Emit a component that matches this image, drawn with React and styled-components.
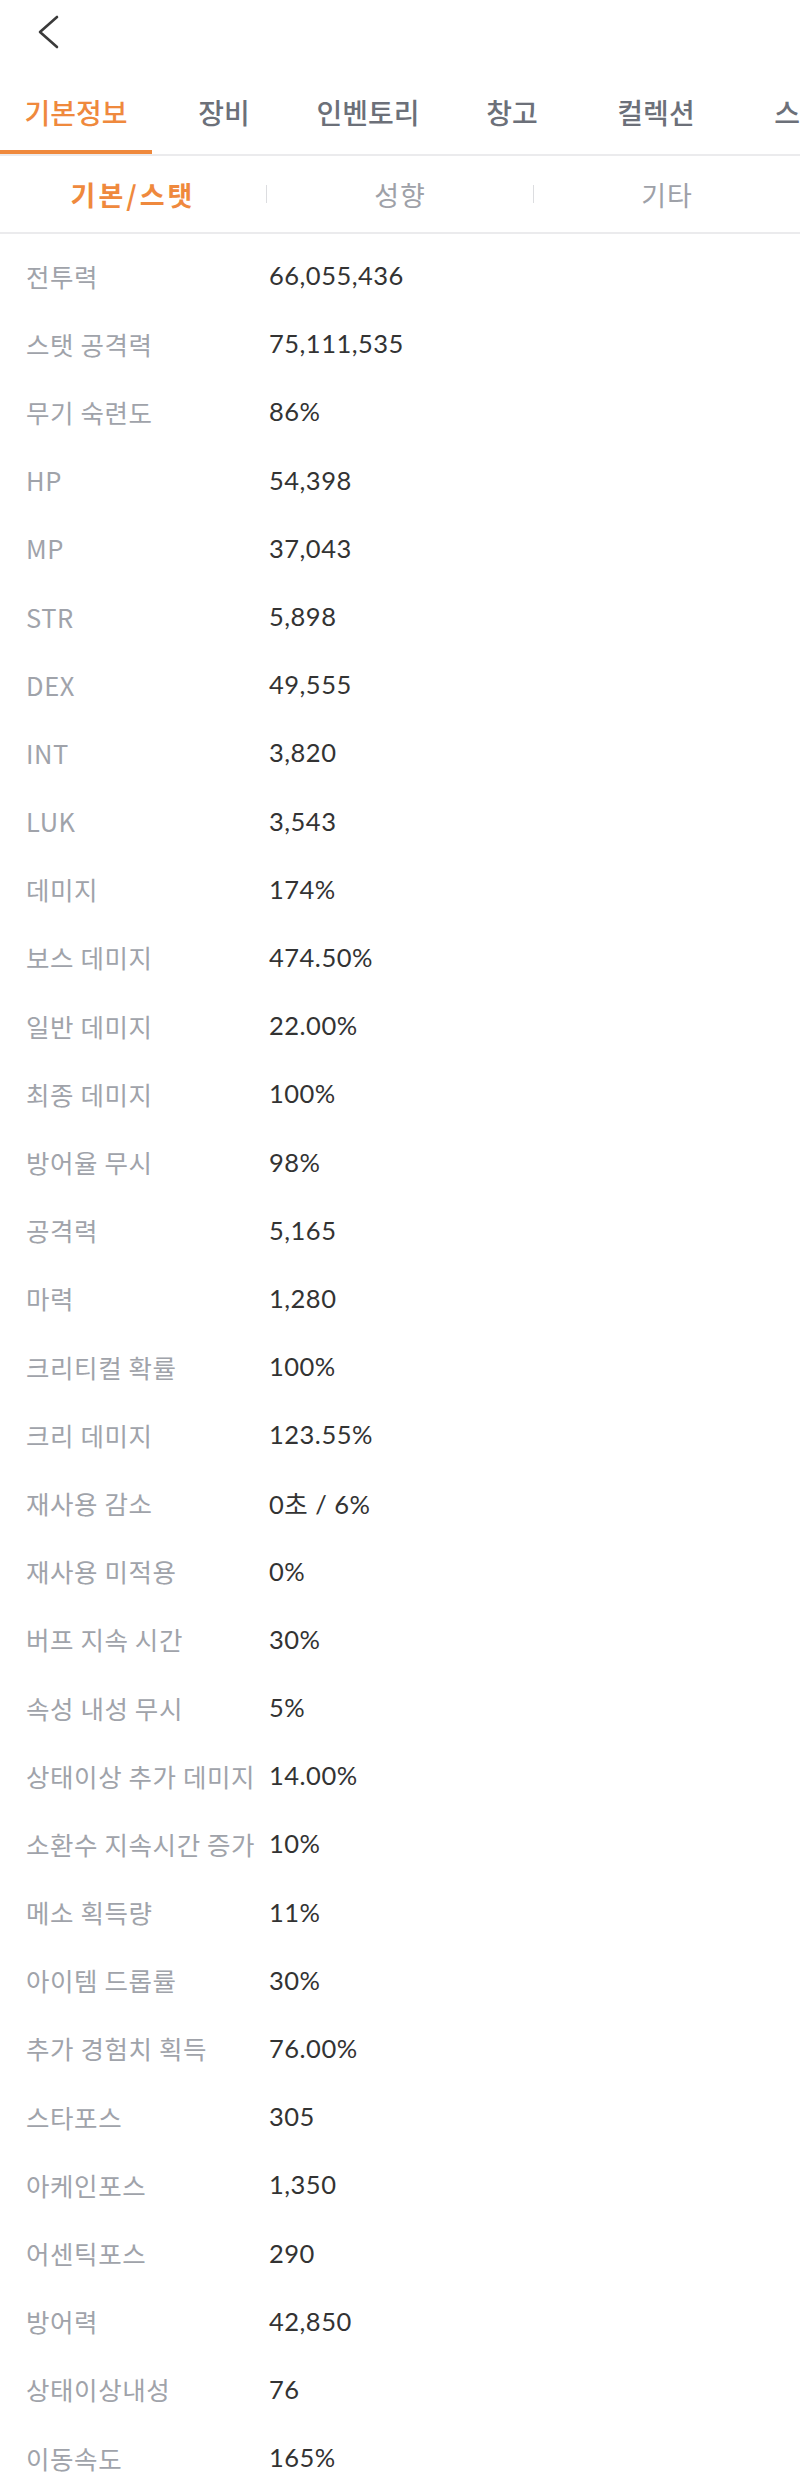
import React from 'react';
import styled, { createGlobalStyle } from 'styled-components';

const GlobalStyle = createGlobalStyle`
  body {
    margin: 0;
    background: #ffffff;
    font-family: 'Noto Sans CJK KR', 'Noto Sans', sans-serif;
  }
`;

const tabs = ['기본정보', '장비', '인벤토리', '창고', '컬렉션', '스킬'];
const subTabs = ['기본/스탯', '성향', '기타'];

const stats = [
  ['전투력', '66,055,436'],
  ['스탯 공격력', '75,111,535'],
  ['무기 숙련도', '86%'],
  ['HP', '54,398'],
  ['MP', '37,043'],
  ['STR', '5,898'],
  ['DEX', '49,555'],
  ['INT', '3,820'],
  ['LUK', '3,543'],
  ['데미지', '174%'],
  ['보스 데미지', '474.50%'],
  ['일반 데미지', '22.00%'],
  ['최종 데미지', '100%'],
  ['방어율 무시', '98%'],
  ['공격력', '5,165'],
  ['마력', '1,280'],
  ['크리티컬 확률', '100%'],
  ['크리 데미지', '123.55%'],
  ['재사용 감소', '0초 / 6%'],
  ['재사용 미적용', '0%'],
  ['버프 지속 시간', '30%'],
  ['속성 내성 무시', '5%'],
  ['상태이상 추가 데미지', '14.00%'],
  ['소환수 지속시간 증가', '10%'],
  ['메소 획득량', '11%'],
  ['아이템 드롭률', '30%'],
  ['추가 경험치 획득', '76.00%'],
  ['스타포스', '305'],
  ['아케인포스', '1,350'],
  ['어센틱포스', '290'],
  ['방어력', '42,850'],
  ['상태이상내성', '76'],
  ['이동속도', '165%'],
];

const App = () => {
  return (
    <Page>
      <GlobalStyle />
      <Header>
        <BackButton aria-label="back">
          <svg width="22" height="36" viewBox="0 0 22 36" fill="none">
            <polyline
              points="19,2 2,17 19,32"
              stroke="#3a3a3a"
              strokeWidth="2.6"
              strokeLinecap="round"
              strokeLinejoin="round"
            />
          </svg>
        </BackButton>
      </Header>

      <TabBar>
        {tabs.map((t, i) => (
          <Tab key={t} $active={i === 0}>{t}</Tab>
        ))}
      </TabBar>

      <SubTabBar>
        {subTabs.map((t, i) => (
          <React.Fragment key={t}>
            {i > 0 && <SubDivider />}
            <SubTab $active={i === 0}>{t}</SubTab>
          </React.Fragment>
        ))}
      </SubTabBar>

      <StatList>
        {stats.map(([label, value]) => (
          <StatRow key={label}>
            <StatLabel>{label}</StatLabel>
            <StatValue>{value}</StatValue>
          </StatRow>
        ))}
      </StatList>
    </Page>
  );
};

const Page = styled.div`
  width: 800px;
  overflow: hidden;
  background: #fff;
`;

const Header = styled.div`
  height: 66px;
  display: flex;
  align-items: center;
  padding-left: 38px;
`;

const BackButton = styled.div`
  display: flex;
  align-items: center;
  width: 22px;
  height: 36px;
`;

const TabBar = styled.div`
  display: flex;
  align-items: stretch;
  height: 90px;
  border-bottom: 2px solid #ebebed;
  white-space: nowrap;
  overflow: hidden;
  box-sizing: border-box;
`;

const Tab = styled.div`
  flex: none;
  width: ${(p) => (p.$active ? 152 : 144)}px;
  display: flex;
  align-items: center;
  justify-content: center;
  padding-top: 8px;
  box-sizing: border-box;
  font-size: 28px;
  font-weight: 500;
  color: ${(p) => (p.$active ? '#ef893d' : '#6c7079')};
  border-bottom: 5px solid ${(p) => (p.$active ? '#ef893d' : 'transparent')};
  margin-bottom: -1px;
`;

const SubTabBar = styled.div`
  display: flex;
  align-items: center;
  height: 78px;
  border-bottom: 2px solid #ebebed;
  box-sizing: border-box;
`;

const SubTab = styled.div`
  flex: 1;
  text-align: center;
  font-size: 27px;
  letter-spacing: ${(p) => (p.$active ? 3 : 1)}px;
  font-weight: ${(p) => (p.$active ? 600 : 400)};
  color: ${(p) => (p.$active ? '#ef893d' : '#9ea1a8')};
`;

const SubDivider = styled.div`
  width: 1px;
  height: 18px;
  background: #dcdde0;
`;

const StatList = styled.div`
  padding-top: 7px;
`;

const StatRow = styled.div`
  display: grid;
  grid-template-columns: 243px 1fr;
  align-items: center;
  height: 68.2px;
  padding-left: 26px;
`;

const StatLabel = styled.div`
  font-size: 25.5px;
  letter-spacing: 0.6px;
  color: #a0a3aa;
  white-space: nowrap;
`;

const StatValue = styled.div`
  font-family: Lato, 'Noto Sans CJK KR', sans-serif;
  font-size: 25.5px;
  letter-spacing: 0.5px;
  color: #333333;
  white-space: nowrap;
`;

export default App;
